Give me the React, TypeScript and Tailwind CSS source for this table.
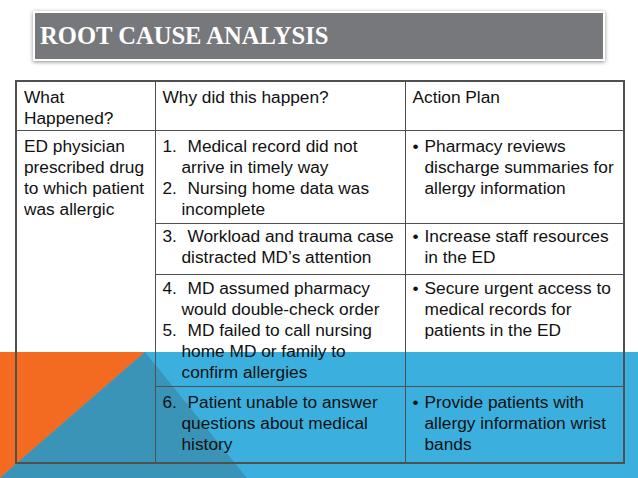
import React from "react"

const cell = "border border-[#505050] align-top pl-[7px] pr-[2px] text-left font-normal"

function Num({ n, children }: { n: string; children: React.ReactNode }) {
  return (
    <div className="pl-[19px] -indent-[19px]">
      <span className="inline-block w-[25px] indent-0">{n}</span>
      {children}
    </div>
  )
}

function Bullet({ children }: { children: React.ReactNode }) {
  return (
    <div className="flex">
      <span className="w-[12px] shrink-0">•</span>
      <span>{children}</span>
    </div>
  )
}

export default function App() {
  return (
    <div className="relative w-[638px] h-[478px] overflow-hidden bg-white">
      {/* decorative slide background */}
      <svg className="absolute inset-0" width="638" height="478" viewBox="0 0 638 478">
        <rect x="0" y="352" width="638" height="126" fill="#3bb0de" />
        <polygon points="0,352 145,352 0,478" fill="#f36b21" />
        <polygon points="145,352 247,478 0,478" fill="#3a94b7" />
      </svg>

      <div className="relative pt-[11px]">
        <div className="ml-[33px] w-[572px] h-[50px] flex items-center bg-[#77787c] border-2 border-white shadow-[0_1px_4px_rgba(0,0,0,0.45)] pl-[5px]">
          <h1 className="text-white text-[24.6px] leading-none font-bold font-['Liberation_Serif',serif]">
            ROOT CAUSE ANALYSIS
          </h1>
        </div>

        <table className="mt-[19px] ml-[15px] w-[608px] table-fixed border-collapse border-2 border-[#505050] font-['Liberation_Sans',Arial,sans-serif] text-[17.3px] leading-[21px] text-[#111]">
          <colgroup>
            <col className="w-[139px]" />
            <col className="w-[250px]" />
            <col className="w-[219px]" />
          </colgroup>
          <thead>
            <tr className="h-[49px]">
              <th className={`${cell} pt-[5px]`}>What Happened?</th>
              <th className={`${cell} pt-[5px]`}>Why did this happen?</th>
              <th className={`${cell} pt-[5px]`}>Action Plan</th>
            </tr>
          </thead>
          <tbody>
            <tr className="h-[93px]">
              <td rowSpan={4} className={`${cell} pt-[5px]`}>
                ED physician prescribed drug to which patient was allergic
              </td>
              <td className={`${cell} pt-[5px]`}>
                <Num n="1.">Medical record did not arrive in timely way</Num>
                <Num n="2.">Nursing home data was incomplete</Num>
              </td>
              <td className={`${cell} pt-[5px]`}>
                <Bullet>Pharmacy reviews discharge summaries for allergy information</Bullet>
              </td>
            </tr>
            <tr className="h-[51px]">
              <td className={`${cell} pt-[2px]`}>
                <Num n="3.">Workload and trauma case distracted MD’s attention</Num>
              </td>
              <td className={`${cell} pt-[2px]`}>
                <Bullet>Increase staff resources in the ED</Bullet>
              </td>
            </tr>
            <tr className="h-[112px]">
              <td className={`${cell} pt-[3px]`}>
                <Num n="4.">MD assumed pharmacy would double-check order</Num>
                <Num n="5.">MD failed to call nursing home MD or family to confirm allergies</Num>
              </td>
              <td className={`${cell} pt-[3px]`}>
                <Bullet>Secure urgent access to medical records for patients in the ED</Bullet>
              </td>
            </tr>
            <tr className="h-[77px]">
              <td className={`${cell} pt-[5px]`}>
                <Num n="6.">Patient unable to answer questions about medical history</Num>
              </td>
              <td className={`${cell} pt-[5px]`}>
                <Bullet>Provide patients with allergy information wrist bands</Bullet>
              </td>
            </tr>
          </tbody>
        </table>
      </div>
    </div>
  )
}
